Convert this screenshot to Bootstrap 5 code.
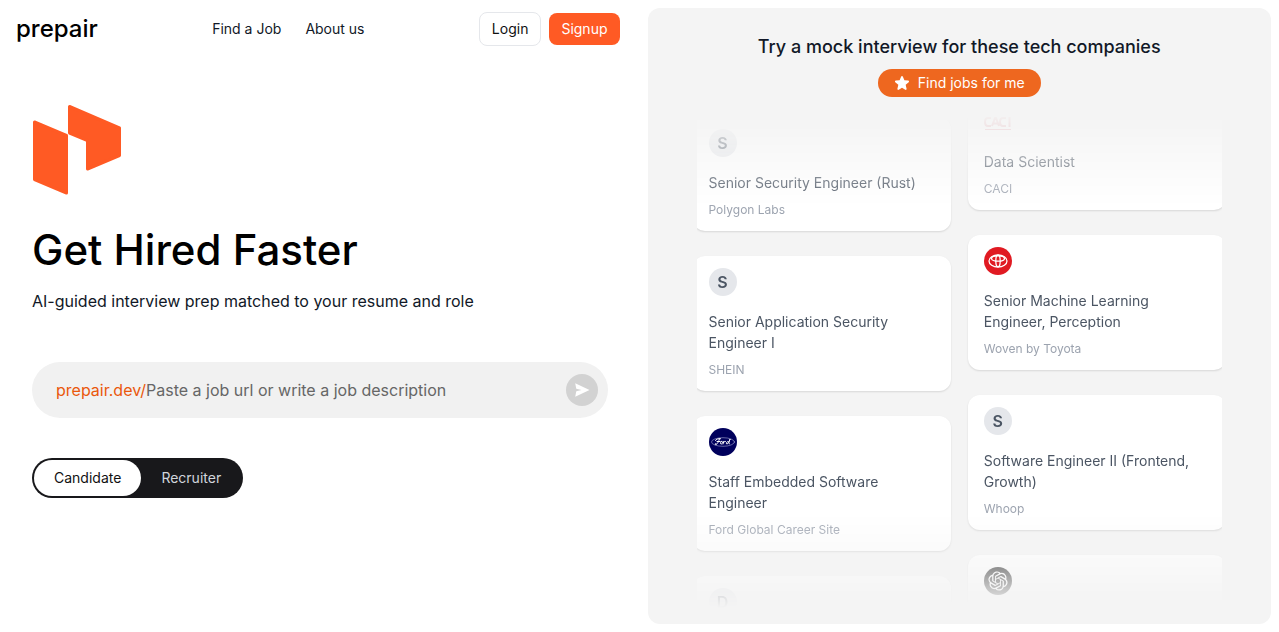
<!DOCTYPE html>
<html lang="en">
<head>
<meta charset="utf-8">
<meta name="viewport" content="width=device-width, initial-scale=1">
<title>prepair</title>
<link href="https://cdn.jsdelivr.net/npm/bootstrap@5.3.0/dist/css/bootstrap.min.css" rel="stylesheet">
<style>
  body { font-family: Inter, "Liberation Sans", sans-serif; font-size: 14px; line-height: 20px; color: #111827; background: #fff; }
  .brand-name { font-size: 24px; line-height: 32px; font-weight: 500; color: #000; }
  .top-bar { padding: 12px 20px 12px 16px; }
  .top-bar .btn { font-size: 14px; line-height: 20px; border-radius: 8px; padding: 6px 12px; }
  .top-bar .btn-login { border: 1px solid #e5e7eb; color: #111; background: #fff; }
  .top-bar .btn-signup { border: 0; color: #fff; background: #ff5a24; }
  .hero { padding: 46px 32px 32px; }
  .hero h1 { font-size: 42px; line-height: 48px; font-weight: 500; color: #000; margin: 30px 0 14px; }
  .hero .tagline { font-size: 16px; line-height: 26px; }
  .prompt-bar { background: #f1f1f1; height: 56px; padding: 0 10px 0 24px; font-size: 16px; }
  .prompt-bar label { color: #ea580c; }
  .prompt-bar input { border: 0; background: none; outline: 0; padding: 0; min-width: 0; color: #333; }
  .prompt-bar input::placeholder { color: #666; opacity: 1; }
  .send-btn { width: 32px; height: 32px; border: 0; background: #d2d2d2; }
  .role-switch { background: #18181b; padding: 2px; margin-top: 40px; }
  .role-switch button { border: 0; background: none; height: 36px; padding: 0 20px; color: #d1d5db; }
  .role-switch button.active { background: #fff; color: #111; }
  .panel { background: #f4f4f4; border-radius: 12px; height: calc(100vh - 16px); padding-top: 25px; }
  .panel h2 { font-size: 18px; line-height: 28px; font-weight: 500; }
  .find-btn { border: 0; background: #ee671f; color: #fff; height: 28px; padding: 0 16px; }
  .job-window { margin: 15px 49px 16px; min-height: 0;
    -webkit-mask-image: linear-gradient(transparent, #000 20%, #000 80%, transparent);
    mask-image: linear-gradient(transparent, #000 20%, #000 80%, transparent); }
  .job-track { margin: 0 -4px; gap: 17px; }
  .job-list { flex: 1 1 0; min-width: 0; gap: 25px; margin-top: 5px; }
  .job-list.shifted { margin-top: -16px; }
  .job { background: #fff; border-radius: 12px; padding: 12px 16px 13px; box-shadow: 0 1px 2px rgba(0,0,0,.12); }
  .job h3 { font-size: 14px; line-height: 21px; font-weight: 400; color: #4b5563; margin: 15px 0 9px; }
  .job p { font-size: 12px; line-height: 16px; color: #9ca3af; margin: 0; }
  .job-next { min-height: 135px; }
  .avatar { width: 28px; height: 28px; background: #e5e7eb; color: #4b5563; font-size: 16px; font-weight: 600; }
  .job svg { display: block; }
</style>
</head>
<body>
<div class="container-fluid p-0">
  <div class="row g-0">
    <div class="col-6">
      <header class="top-bar d-flex align-items-center justify-content-between">
        <a class="brand-name text-decoration-none" href="#">prepair</a>
        <nav class="d-flex gap-4">
          <a class="text-reset text-decoration-none" href="#">Find a Job</a>
          <a class="text-reset text-decoration-none" href="#">About us</a>
        </nav>
        <div class="d-flex align-items-center gap-2">
          <button class="btn btn-login" type="button">Login</button>
          <button class="btn btn-signup" type="button">Signup</button>
        </div>
      </header>
      <main class="hero">
        <svg class="d-block" width="90" height="92" viewBox="0 0 90 92" fill="#ff5a24" stroke="#ff5a24" stroke-width="3" stroke-linejoin="round" aria-hidden="true">
          <path d="M2.5 18 34.5 31.5V89L2.500 75.500Z"/>
          <path d="M37.500 2.500 87.500 24V51.500L55.500 65V36.500L37.500 29Z"/>
        </svg>
        <h1>Get Hired Faster</h1>
        <p class="tagline mb-5">AI-guided interview prep matched to your resume and role</p>
        <form class="prompt-bar d-flex align-items-center rounded-pill">
          <label for="job-input">prepair.dev/</label>
          <input id="job-input" class="flex-grow-1" type="text" placeholder="Paste a job url or write a job description">
          <button class="send-btn rounded-circle d-flex align-items-center justify-content-center p-0" type="button" aria-label="Send">
            <svg width="16" height="16" viewBox="0 0 16 16" fill="#fff"><path d="M1.200 1.300 15.500 8 1.200 14.800 2.300 9.300 7.500 8 2.300 6.700Z"/></svg>
          </button>
        </form>
        <div class="role-switch d-inline-flex rounded-pill">
          <button class="active rounded-pill" type="button">Candidate</button>
          <button class="rounded-pill" type="button">Recruiter</button>
        </div>
      </main>
    </div>
    <div class="col-6 p-2">
      <section class="panel d-flex flex-column">
        <h2 class="text-center mb-2">Try a mock interview for these tech companies</h2>
        <button class="find-btn rounded-pill align-self-center flex-shrink-0 d-flex align-items-center gap-2" type="button">
          <svg width="16" height="16" viewBox="0 0 24 24" fill="#fff" aria-hidden="true"><path d="M10.800 2.200c.5-1.100 1.900-1.100 2.400 0l2.400 5.700 5.700.5c1.200.1 1.700 1.600.8 2.400l-4.600 4 1.400 6c.3 1.200-1 2.100-2 1.500L12 19l-4.900 3.300c-1 .6-2.300-.3-2-1.500l1.400-6-4.600-4c-.9-.8-.4-2.300.8-2.400l5.700-.5Z"/></svg>
          <span>Find jobs for me</span>
        </button>
        <div class="job-window flex-grow-1 overflow-hidden">
          <div class="job-track d-flex align-items-start">
            <div class="job-list d-flex flex-column">
              <article class="job">
                <div class="avatar rounded-circle d-flex align-items-center justify-content-center">S</div>
                <h3>Senior Security Engineer (Rust)</h3>
                <p>Polygon Labs</p>
              </article>
              <article class="job">
                <div class="avatar rounded-circle d-flex align-items-center justify-content-center">S</div>
                <h3>Senior Application Security Engineer I</h3>
                <p>SHEIN</p>
              </article>
              <article class="job">
                <svg width="28" height="28" viewBox="0 0 28 28" fill="none" stroke="#c9cdec" stroke-linecap="round" stroke-linejoin="round" aria-hidden="true">
                  <circle cx="14" cy="14" r="14" fill="#00005c" stroke="none"/>
                  <ellipse cx="14" cy="14" rx="11.500" ry="4.300" stroke-width=".5"/>
                  <path stroke="#fff" d="M6.500 12.500c.3-1.600 3-2 5-1.800M10.500 10.800c-.8 2.600-1.800 5-3.500 5.700-1 .3-1.300-.5-.5-1M8 13.500h3.200M12.800 13.300c-1.300 0-2 2.700-.6 2.700 1.300 0 2-2.700.6-2.700M14.800 13.300l-.8 2.700M14.600 14.600c.5-.9 1.100-1.400 1.900-1.200M19 13.500c-1.400-.2-2.400 2.400-1 2.500 1.200 0 2.100-2.700 3.200-5-1 1.800-2.200 4.900-.8 4.900"/>
                </svg>
                <h3>Staff Embedded Software Engineer</h3>
                <p>Ford Global Career Site</p>
              </article>
              <article class="job job-next">
                <div class="avatar rounded-circle d-flex align-items-center justify-content-center">D</div>
              </article>
            </div>
            <div class="job-list shifted d-flex flex-column">
              <article class="job">
                <svg width="28" height="28" viewBox="0 0 28 28" fill="none" stroke="#e58f99" stroke-width="2" aria-hidden="true">
                  <path d="M7 10H4c-2 0-3 1-3 4s1 4 3 4h3M8 18l3-8h1l3 8M9 15.500h5M22 10h-3c-2 0-3 1-3 4s1 4 3 4h3M25.500 9v10"/>
                  <path stroke-width="1" d="M1 21.500h26"/>
                </svg>
                <h3>Data Scientist</h3>
                <p>CACI</p>
              </article>
              <article class="job">
                <svg width="28" height="28" viewBox="0 0 28 28" fill="none" stroke="#fff" stroke-width="1.300" aria-hidden="true">
                  <circle cx="14" cy="14" r="14" fill="#e01a22" stroke="none"/>
                  <ellipse cx="14" cy="14" rx="9" ry="6"/>
                  <ellipse cx="14" cy="11.500" rx="6.500" ry="2.700"/>
                  <ellipse cx="14" cy="14" rx="2.200" ry="5.800"/>
                </svg>
                <h3>Senior Machine Learning Engineer, Perception</h3>
                <p>Woven by Toyota</p>
              </article>
              <article class="job">
                <div class="avatar rounded-circle d-flex align-items-center justify-content-center">S</div>
                <h3>Software Engineer II (Frontend, Growth)</h3>
                <p>Whoop</p>
              </article>
              <article class="job job-next">
                <svg width="28" height="28" viewBox="0 0 28 28" aria-hidden="true">
                  <circle cx="14" cy="14" r="14" fill="#000"/>
                  <path transform="translate(4.400 4.400) scale(.8)" fill="#fff" d="M22.282 9.821a5.985 5.985 0 0 0-.516-4.910 6.046 6.046 0 0 0-6.510-2.900A6.065 6.065 0 0 0 4.981 4.182a5.985 5.985 0 0 0-3.998 2.900 6.046 6.046 0 0 0 .743 7.097 5.980 5.980 0 0 0 .511 4.911 6.051 6.051 0 0 0 6.515 2.900A5.985 5.985 0 0 0 13.260 24a6.056 6.056 0 0 0 5.772-4.206 5.990 5.990 0 0 0 3.998-2.900 6.056 6.056 0 0 0-.748-7.073zM13.260 22.430a4.476 4.476 0 0 1-2.876-1.041l.141-.081 4.779-2.758a.795.795 0 0 0 .393-.681v-6.737l2.020 1.169a.071.071 0 0 1 .038.052v5.583a4.504 4.504 0 0 1-4.495 4.494zM3.600 18.304a4.471 4.471 0 0 1-.535-3.014l.142.085 4.783 2.759a.771.771 0 0 0 .781 0l5.843-3.369v2.332a.080.080 0 0 1-.033.062L9.740 19.950a4.499 4.499 0 0 1-6.140-1.646zM2.341 7.896a4.485 4.485 0 0 1 2.366-1.973V11.600a.766.766 0 0 0 .388.677l5.815 3.355-2.020 1.168a.076.076 0 0 1-.071 0l-4.830-2.787A4.504 4.504 0 0 1 2.341 7.872zm16.597 3.855-5.833-3.387L15.119 7.200a.076.076 0 0 1 .071 0l4.830 2.791a4.494 4.494 0 0 1-.676 8.105v-5.678a.790.790 0 0 0-.407-.667zm2.010-3.023-.141-.085-4.774-2.782a.776.776 0 0 0-.785 0L9.409 9.230V6.897a.066.066 0 0 1 .028-.061l4.830-2.787a4.499 4.499 0 0 1 6.680 4.660zM8.307 12.863l-2.020-1.164a.080.080 0 0 1-.038-.057V6.074a4.499 4.499 0 0 1 7.376-3.453l-.142.080L8.704 5.459a.795.795 0 0 0-.393.681zm1.097-2.365 2.602-1.500 2.607 1.500v2.999l-2.597 1.500-2.607-1.500Z"/>
                </svg>
              </article>
            </div>
          </div>
        </div>
      </section>
    </div>
  </div>
</div>
<script src="https://cdn.jsdelivr.net/npm/bootstrap@5.3.0/dist/js/bootstrap.bundle.min.js"></script>
</body>
</html>
